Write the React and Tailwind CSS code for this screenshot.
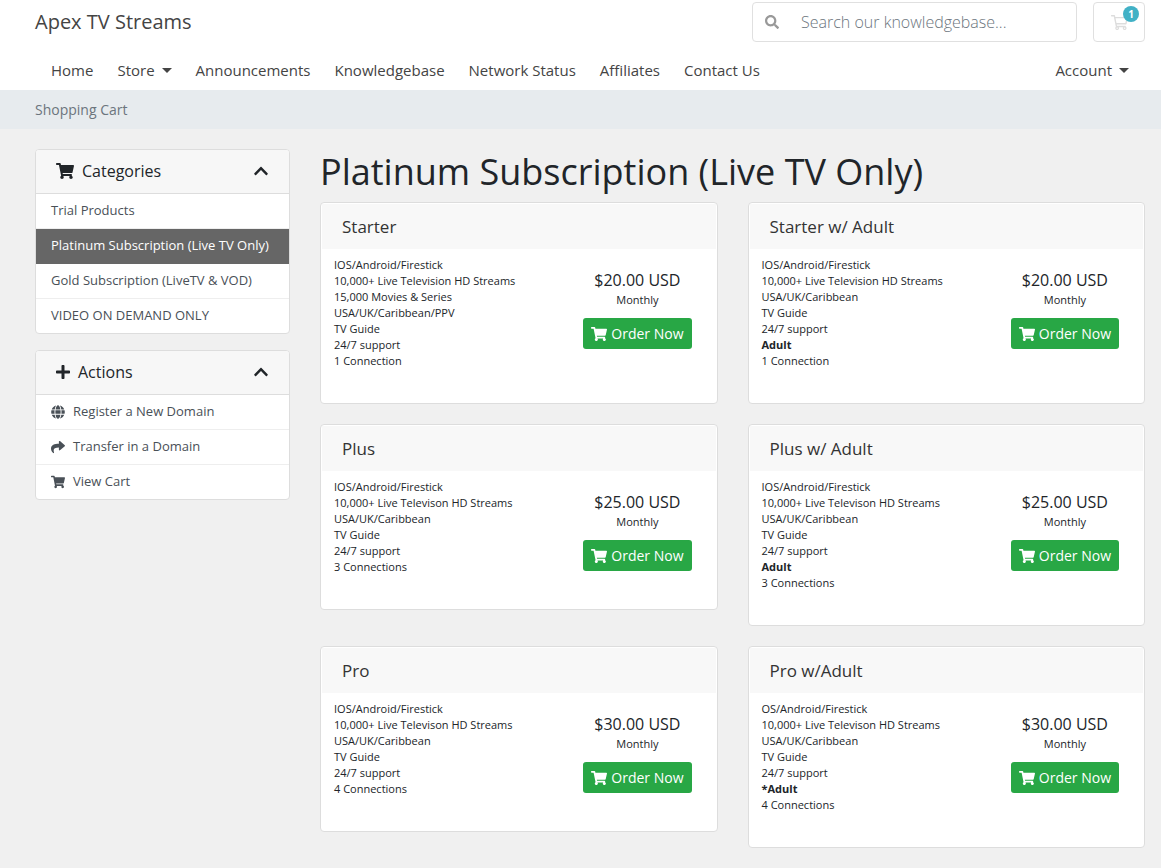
import React, { useState } from 'react';
import {
  FaShoppingCart,
  FaSearch,
  FaPlus,
  FaGlobe,
  FaShare,
  FaChevronUp,
  FaChevronDown,
} from 'react-icons/fa';

const NAV_LINKS = ['Announcements', 'Knowledgebase', 'Network Status', 'Affiliates', 'Contact Us'];

const CATEGORIES = [
  { label: 'Trial Products' },
  { label: 'Platinum Subscription (Live TV Only)', active: true },
  { label: 'Gold Subscription (LiveTV & VOD)' },
  { label: 'VIDEO ON DEMAND ONLY' },
];

const ACTIONS = [
  { label: 'Register a New Domain', icon: FaGlobe },
  { label: 'Transfer in a Domain', icon: FaShare },
  { label: 'View Cart', icon: FaShoppingCart },
];

const PRODUCTS = [
  {
    name: 'Starter',
    price: '$20.00 USD',
    features: [
      'IOS/Android/Firestick',
      '10,000+ Live Television HD Streams',
      '15,000 Movies & Series',
      'USA/UK/Caribbean/PPV',
      'TV Guide',
      '24/7 support',
      '1 Connection',
    ],
  },
  {
    name: 'Starter w/ Adult',
    price: '$20.00 USD',
    highlight: 'Adult',
    features: [
      'IOS/Android/Firestick',
      '10,000+ Live Television HD Streams',
      'USA/UK/Caribbean',
      'TV Guide',
      '24/7 support',
      'Adult',
      '1 Connection',
    ],
  },
  {
    name: 'Plus',
    price: '$25.00 USD',
    features: [
      'IOS/Android/Firestick',
      '10,000+ Live Televison HD Streams',
      'USA/UK/Caribbean',
      'TV Guide',
      '24/7 support',
      '3 Connections',
    ],
  },
  {
    name: 'Plus w/ Adult',
    price: '$25.00 USD',
    highlight: 'Adult',
    features: [
      'IOS/Android/Firestick',
      '10,000+ Live Televison HD Streams',
      'USA/UK/Caribbean',
      'TV Guide',
      '24/7 support',
      'Adult',
      '3 Connections',
    ],
  },
  {
    name: 'Pro',
    price: '$30.00 USD',
    features: [
      'IOS/Android/Firestick',
      '10,000+ Live Televison HD Streams',
      'USA/UK/Caribbean',
      'TV Guide',
      '24/7 support',
      '4 Connections',
    ],
  },
  {
    name: 'Pro w/Adult',
    price: '$30.00 USD',
    highlight: '*Adult',
    features: [
      'OS/Android/Firestick',
      '10,000+ Live Televison HD Streams',
      'USA/UK/Caribbean',
      'TV Guide',
      '24/7 support',
      '*Adult',
      '4 Connections',
    ],
  },
];

const CartOutline = () => (
  <svg viewBox="0 0 576 512" className="h-[15px] w-[17px]" fill="currentColor" aria-hidden="true">
    <path d="M551.991 64H144.28l-8.726-44.608C133.35 8.128 123.478 0 112 0H12C5.373 0 0 5.373 0 12v24c0 6.627 5.373 12 12 12h80.24l69.594 355.701C150.796 415.201 144 430.802 144 448c0 35.346 28.654 64 64 64s64-28.654 64-64a63.681 63.681 0 0 0-8.583-32h145.167a63.681 63.681 0 0 0-8.583 32c0 35.346 28.654 64 64 64 35.346 0 64-28.654 64-64 0-17.993-7.435-34.24-19.388-45.868C506.022 391.891 496.76 368 475.6 368H203.76l-9.39-48h312.405c11.29 0 21.054-7.869 23.452-18.902l45.216-208C578.695 78.139 567.299 64 551.991 64zM208 472c-13.234 0-24-10.766-24-24s10.766-24 24-24 24 10.766 24 24-10.766 24-24 24zm256 0c-13.234 0-24-10.766-24-24s10.766-24 24-24 24 10.766 24 24-10.766 24-24 24zm23.438-200H184.98l-31.31-160h368.548l-34.78 160z" />
  </svg>
);

const Caret = () => (
  <svg viewBox="0 0 10 5" className="h-[5px] w-[10px]" fill="currentColor" aria-hidden="true">
    <path d="M0 0h10L5 5z" />
  </svg>
);

const Header = () => (
  <header className="bg-white text-[#444]">
    <div className="flex items-center justify-between pt-0.5 pr-4 pl-[35px]">
      <a href="#" className="text-xl text-[#444]">Apex TV Streams</a>
      <div className="flex items-stretch gap-4">
        <form className="flex h-10 w-[325px] items-center rounded border border-[#e0e0e0] bg-white">
          <button type="submit" aria-label="Search" className="px-3 text-[#999]">
            <FaSearch size={14} />
          </button>
          <input
            type="search"
            aria-label="Search our knowledgebase"
            placeholder="Search our knowledgebase..."
            className="min-w-0 flex-1 px-2.5 text-base font-light placeholder-[#6c757d] focus:outline-none"
          />
        </form>
        <a
          href="#"
          aria-label="Shopping cart"
          className="relative flex w-[52px] items-center justify-center rounded border border-[#e0e0e0] text-[#ddd]"
        >
          <CartOutline />
          <span className="absolute top-[3px] right-[5px] flex size-4 items-center justify-center rounded-full bg-[#41b1c6] text-[10px] font-bold text-white">
            1
          </span>
        </a>
      </div>
    </div>
    <nav className="flex items-center justify-between pt-3 pr-8 pb-1 pl-[51px] text-[15px] leading-8">
      <div className="flex gap-6">
        <a href="#">Home</a>
        <button type="button" className="flex items-center gap-[7px]">
          Store <Caret />
        </button>
        {NAV_LINKS.map((label) => (
          <a key={label} href="#">{label}</a>
        ))}
      </div>
      <button type="button" className="flex items-center gap-[7px]">
        Account <Caret />
      </button>
    </nav>
  </header>
);

const SidebarPanel = ({ title, icon: Icon, items }) => {
  const [open, setOpen] = useState(true);
  const Chevron = open ? FaChevronUp : FaChevronDown;

  return (
    <section className="overflow-hidden rounded border border-[#ddd] bg-white">
      <h2>
        <button
          type="button"
          aria-expanded={open}
          onClick={() => setOpen(!open)}
          className="flex h-[43px] w-full items-center gap-2 bg-[#f7f7f7] px-5 pb-0.5 text-base text-[#212529]"
        >
          <Icon className={Icon === FaPlus ? 'h-4 w-[14px]' : 'h-4 w-[18px]'} />
          <span className="flex-1 text-left">{title}</span>
          <Chevron size={16} />
        </button>
      </h2>
      {open && (
        <ul className="border-t border-[#ddd] text-[13px]">
          {items.map(({ label, icon: ItemIcon, active }) => (
            <li
              key={label}
              className={
                active
                  ? 'border-b border-[#666] bg-[#666] text-white'
                  : 'border-b border-[#eee] text-[#495057] last:border-b-0'
              }
            >
              <a href="#" className="flex h-[34px] items-center px-[15px]">
                {ItemIcon && <ItemIcon size={14} className="mr-2" />}
                {label}
              </a>
            </li>
          ))}
        </ul>
      )}
    </section>
  );
};

const ProductCard = ({ product }) => (
  <article className="rounded border border-[#ddd] bg-white p-px">
    <h2 className="bg-[#f8f8f8] px-5 py-2.5 text-[17px] leading-[25px] text-[#333]">{product.name}</h2>
    <div className="flex items-start justify-between pt-2 pr-6 pb-[33px] pl-3 text-[11px] leading-4 text-[#212529]">
      <ul>
        {product.features.map((feature) => (
          <li key={feature} className={feature === product.highlight ? 'font-bold' : ''}>
            {feature}
          </li>
        ))}
      </ul>
      <div className="flex flex-col items-center pt-[11px]">
        <span className="text-base leading-6">{product.price}</span>
        <span>Monthly</span>
        <button
          type="button"
          className="mt-2.5 flex items-center gap-1 rounded-[3px] bg-[#28a745] px-2 py-1 text-sm leading-[23px] text-white"
        >
          <FaShoppingCart size={16} />
          Order Now
        </button>
      </div>
    </div>
  </article>
);

const App = () => {
  return (
    <div className="min-h-screen bg-[#f0f0f0] font-['Open_Sans',sans-serif] text-[#212529]">
      <Header />
      <nav aria-label="Breadcrumb" className="bg-[#e7ebee] py-2 pl-[35px] text-sm leading-[23px] text-[#6c757d]">
        Shopping Cart
      </nav>

      <div className="flex gap-[30px] pt-5 pr-4 pb-5 pl-[35px]">
        <aside className="flex w-[255px] shrink-0 flex-col gap-4">
          <SidebarPanel title="Categories" icon={FaShoppingCart} items={CATEGORIES} />
          <SidebarPanel title="Actions" icon={FaPlus} items={ACTIONS} />
        </aside>

        <main className="min-w-0 flex-1">
          <h1 className="mb-2 text-4xl leading-[45px]">Platinum Subscription (Live TV Only)</h1>
          <div className="grid grid-cols-2 items-start gap-x-[30px] gap-y-5">
            {PRODUCTS.map((product) => (
              <ProductCard key={product.name} product={product} />
            ))}
          </div>
        </main>
      </div>
    </div>
  );
};

export default App;
